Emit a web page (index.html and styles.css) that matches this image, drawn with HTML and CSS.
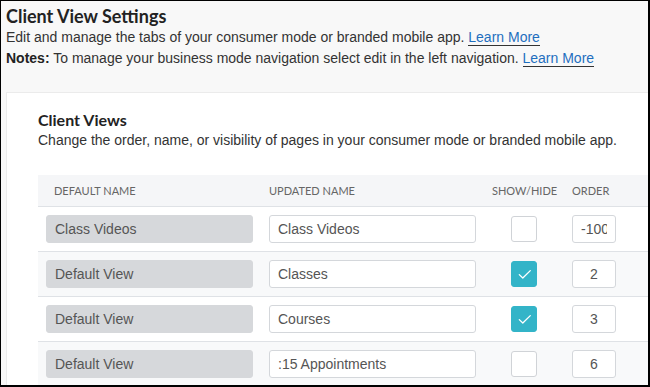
FILE: index.html
```html
<!DOCTYPE html>
<html lang="en">
<head>
<meta charset="utf-8">
<title>Client View Settings</title>
<link rel="stylesheet" href="styles.css">
</head>
<body>
<div class="frame">
  <h1 class="page-title">Client View Settings</h1>
  <p class="intro">Edit and manage the tabs of your consumer mode or branded mobile app. <a class="link" href="#">Learn More</a></p>
  <p class="intro"><strong class="notes">Notes:</strong> To manage your business mode navigation select edit in the left navigation. <a class="link" href="#">Learn More</a></p>

  <section class="card">
    <h2 class="card-title">Client Views</h2>
    <p class="card-sub">Change the order, name, or visibility of pages in your consumer mode or branded mobile app.</p>

    <div class="table">
      <div class="row head">
        <div class="cell first">DEFAULT NAME</div>
        <div class="cell">UPDATED NAME</div>
        <div class="cell">SHOW/HIDE</div>
        <div class="cell">ORDER</div>
      </div>

      <div class="row">
        <div class="cell"><div class="default-name">Class Videos</div></div>
        <div class="cell"><input class="name-input" type="text" value="Class Videos"></div>
        <div class="cell center"><span class="check"></span></div>
        <div class="cell"><input class="order-input" type="text" value="-100"></div>
      </div>

      <div class="row alt">
        <div class="cell"><div class="default-name">Default View</div></div>
        <div class="cell"><input class="name-input" type="text" value="Classes"></div>
        <div class="cell center"><span class="check checked"><svg width="26" height="26" viewBox="0 0 26 26"><path d="M8.3 13.6 L11.8 17 L19.3 9.6" fill="none" stroke="#fff" stroke-width="1.3" stroke-linecap="round" stroke-linejoin="round"/></svg></span></div>
        <div class="cell"><input class="order-input" type="text" value="2"></div>
      </div>

      <div class="row">
        <div class="cell"><div class="default-name">Default View</div></div>
        <div class="cell"><input class="name-input" type="text" value="Courses"></div>
        <div class="cell center"><span class="check checked"><svg width="26" height="26" viewBox="0 0 26 26"><path d="M8.3 13.6 L11.8 17 L19.3 9.6" fill="none" stroke="#fff" stroke-width="1.3" stroke-linecap="round" stroke-linejoin="round"/></svg></span></div>
        <div class="cell"><input class="order-input" type="text" value="3"></div>
      </div>

      <div class="row alt">
        <div class="cell"><div class="default-name">Default View</div></div>
        <div class="cell"><input class="name-input" type="text" value=":15 Appointments"></div>
        <div class="cell center"><span class="check"></span></div>
        <div class="cell"><input class="order-input" type="text" value="6"></div>
      </div>
    </div>
  </section>
</div>
</body>
</html>
```

FILE: styles.css
```css
html, body {
  margin: 0;
  padding: 0;
  background: #ffffff;
}

.frame {
  box-sizing: border-box;
  width: 650px;
  height: 387px;
  overflow: hidden;
  border-style: solid;
  border-color: #000;
  border-width: 1px 2px 2px 1px;
  background: #f8f8f8;
  padding: 4px 0 0 5px;
  font-family: "Liberation Sans", Arial, sans-serif;
  font-size: 14px;
  color: #333;
}

.page-title {
  margin: 0;
  font-family: Lato, "Liberation Sans", sans-serif;
  font-weight: 700;
  font-size: 18px;
  line-height: normal;
  color: #222;
}

.intro {
  margin: 0;
  line-height: 21px;
  white-space: nowrap;
}

.notes {
  font-family: "Liberation Sans", Arial, sans-serif;
  font-weight: 700;
  color: #222;
}

.link {
  color: #1f6fbf;
  text-decoration: none;
  border-bottom: 1px solid #333;
}

.card {
  margin-top: 23px;
  width: 700px;
  background: #fff;
  border: 1px solid #ebebeb;
  padding: 16px 0 0 31px;
}

.card-title {
  margin: 0;
  font-family: Lato, "Liberation Sans", sans-serif;
  font-weight: 700;
  font-size: 16px;
  line-height: 21px;
  color: #222;
}

.card-sub {
  margin: 0;
  line-height: 21px;
  white-space: nowrap;
}

.table {
  margin-top: 24px;
}

.row {
  display: grid;
  grid-template-columns: 223px 223px 80px 1fr;
  align-items: center;
  padding: 8px 0;
  border-bottom: 1px solid #dfe2e6;
  background: #fff;
}

.row.alt {
  background: #f8f9fa;
}

.row.head {
  height: 32px;
  box-sizing: border-box;
  padding: 0;
  background: #f5f6f8;
  font-family: Lato, "Liberation Sans", sans-serif;
  font-size: 11px;
  color: #666;
}

.cell {
  padding: 0 8px;
  display: flex;
  align-items: center;
}

.cell.first {
  padding-left: 16px;
}

.cell.center {
  justify-content: center;
}

.default-name,
.name-input,
.order-input {
  box-sizing: border-box;
  height: 28px;
  border-radius: 3px;
  font-family: "Liberation Sans", Arial, sans-serif;
  font-size: 14px;
  color: #555;
  padding: 0 8px;
  margin: 0;
}

.default-name {
  width: 207px;
  background: #d6d8db;
  border: 1px solid #d6d8db;
  line-height: 26px;
}

.name-input {
  width: 207px;
  background: #fff;
  border: 1px solid #d4d7db;
  outline: none;
}

.order-input {
  width: 44px;
  background: #fff;
  border: 1px solid #d4d7db;
  text-align: center;
  outline: none;
}

.check {
  box-sizing: border-box;
  width: 26px;
  height: 26px;
  border: 1px solid #d0d3d7;
  border-radius: 3px;
  background: #fff;
  display: block;
  position: relative;
}

.check.checked {
  background: #33b4c8;
  border-color: #33b4c8;
}

.check svg {
  position: absolute;
  left: -1px;
  top: -1px;
}
```
